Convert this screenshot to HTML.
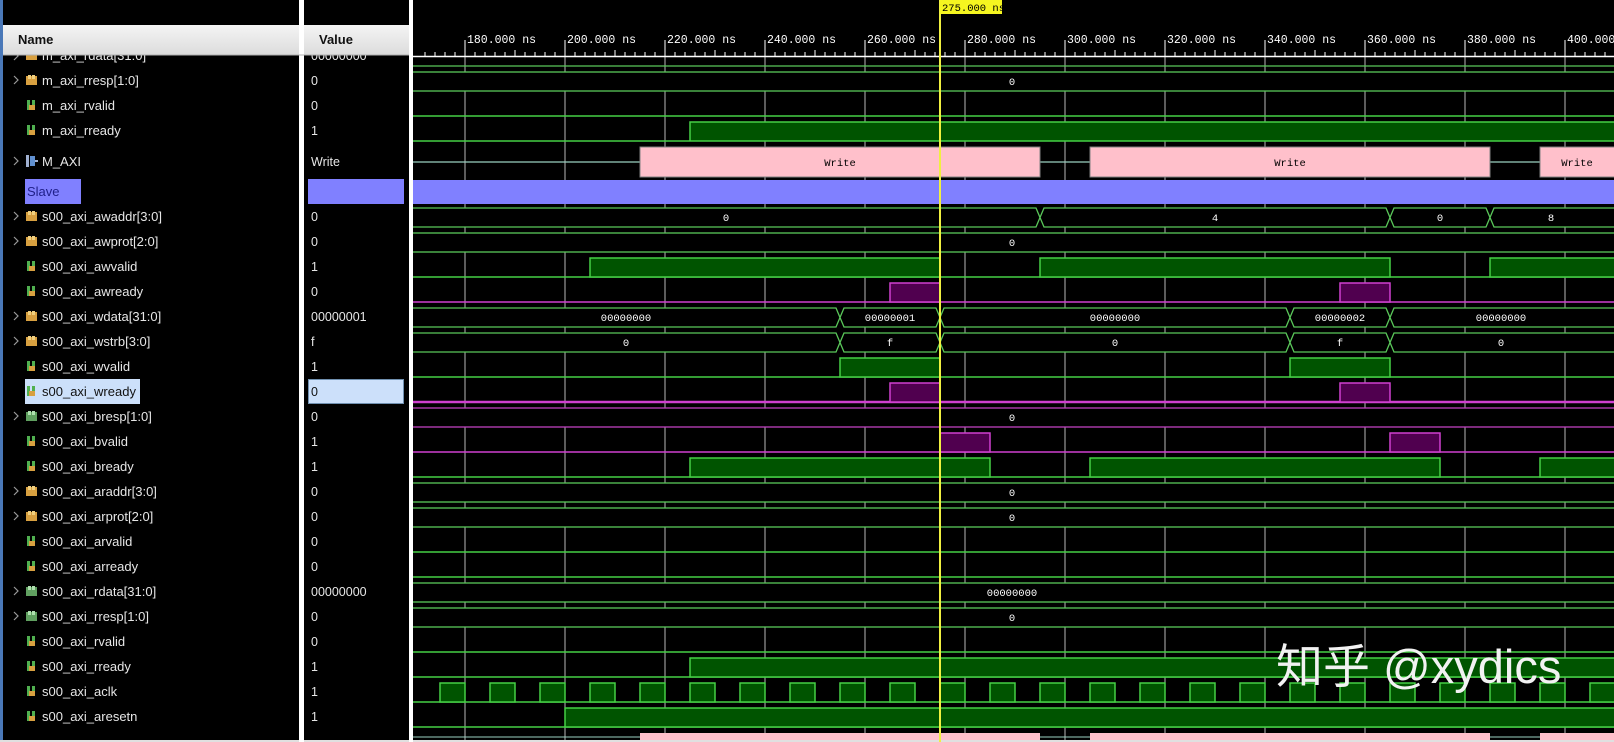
<!DOCTYPE html>
<html><head><meta charset="utf-8"><style>
html,body{margin:0;padding:0;background:#000;width:1614px;height:742px;overflow:hidden}
svg{display:block}
.n{font-family:"Liberation Sans",sans-serif;font-size:13px;fill:#e6e6e6}
.v{font-family:"Liberation Sans",sans-serif;font-size:12.5px;fill:#e6e6e6}
.m{font-family:"Liberation Mono",monospace;font-size:10.5px;fill:#fff}
.r{font-family:"Liberation Mono",monospace;font-size:11.5px;fill:#fff}
.ar{fill:none;stroke:#9a9a9a;stroke-width:1.2}
.g{stroke:#46d046;stroke-width:1.5;fill:#005400}
.gl{stroke:#46d046;stroke-width:1.5;fill:none}
.p{stroke:#d040d0;stroke-width:1.5;fill:#50004f}
.pl{stroke:#d040d0;stroke-width:1.5;fill:none}
.b{stroke:#5ac85a;stroke-width:1.3;fill:#000}
.bm{stroke:#c040c0;stroke-width:1.3;fill:#000}
</style></head><body>
<svg width="1614" height="742" xmlns="http://www.w3.org/2000/svg">
<defs>
<g id="bit"><rect x="0" y="0" width="3" height="10" fill="#50b050"/><rect x="5" y="0" width="3" height="10" fill="#50b050"/><rect x="2" y="5" width="6" height="5" fill="#d8a040"/></g>
<g id="bus"><rect x="0" y="1" width="11" height="9" fill="#d8a040"/><rect x="2" y="0" width="3" height="4" fill="#f0d080"/><rect x="6" y="0" width="3" height="4" fill="#f0d080"/></g>
<g id="busg"><rect x="0" y="1" width="11" height="9" fill="#60a060"/><rect x="2" y="0" width="3" height="4" fill="#b0e0b0"/><rect x="6" y="0" width="3" height="4" fill="#b0e0b0"/></g>
</defs>

<rect x="0" y="0" width="3" height="742" fill="#4a78b8"/>

<g stroke="#b8b8b8" stroke-width="1">
<line x1="465" y1="56" x2="465" y2="742"/><line x1="565" y1="56" x2="565" y2="742"/><line x1="665" y1="56" x2="665" y2="742"/><line x1="765" y1="56" x2="765" y2="742"/><line x1="865" y1="56" x2="865" y2="742"/><line x1="965" y1="56" x2="965" y2="742"/><line x1="1065" y1="56" x2="1065" y2="742"/><line x1="1165" y1="56" x2="1165" y2="742"/><line x1="1265" y1="56" x2="1265" y2="742"/><line x1="1365" y1="56" x2="1365" y2="742"/><line x1="1465" y1="56" x2="1465" y2="742"/><line x1="1565" y1="56" x2="1565" y2="742"/>
</g>

<line x1="413" y1="66" x2="1614" y2="66" stroke="#5ac85a" stroke-width="1.3"/>
<rect class="b" x="405" y="72" width="1220" height="19"/><text class="m" x="1012" y="85" text-anchor="middle">0</text>
<line class="gl" x1="413" y1="116" x2="1614" y2="116"/>
<path class="g" d="M413 141H690V122H1620V141H690"/>
<line x1="413" y1="162" x2="1614" y2="162" stroke="#9ad0c0" stroke-width="1.3"/>
<g fill="#ffc0cb" stroke="#808080"><rect x="640" y="147" width="400" height="30"/><rect x="1090" y="147" width="400" height="30"/><rect x="1540" y="147" width="80" height="30"/></g>
<g class="m" style="fill:#000"><text x="840" y="166" text-anchor="middle">Write</text><text x="1290" y="166" text-anchor="middle">Write</text><text x="1577" y="166" text-anchor="middle">Write</text></g>
<rect x="413" y="180" width="1201" height="24" fill="#8080ff"/>
<path class="b" d="M405 208H1036L1040 217.5L1036 227H405Z"/>
<path class="b" d="M1044 208H1386L1390 217.5L1386 227H1044L1040 217.5Z"/>
<path class="b" d="M1394 208H1486L1490 217.5L1486 227H1394L1390 217.5Z"/>
<path class="b" d="M1494 208H1620V227H1494L1490 217.5Z"/>
<g class="m"><text x="726" y="221" text-anchor="middle">0</text><text x="1215" y="221" text-anchor="middle">4</text><text x="1440" y="221" text-anchor="middle">0</text><text x="1551" y="221" text-anchor="middle">8</text></g>
<rect class="b" x="405" y="233" width="1220" height="19"/><text class="m" x="1012" y="246" text-anchor="middle">0</text>
<path class="gl" d="M413 277H1614"/>
<rect class="g" x="590" y="258" width="350" height="19"/><rect class="g" x="1040" y="258" width="350" height="19"/><rect class="g" x="1490" y="258" width="130" height="19"/>
<path class="pl" d="M413 302H1614"/>
<rect class="p" x="890" y="283" width="50" height="19"/><rect class="p" x="1340" y="283" width="50" height="19"/>
<path class="b" d="M405 308H836L840 317.5L836 327H405Z"/>
<path class="b" d="M844 308H936L940 317.5L936 327H844L840 317.5Z"/>
<path class="b" d="M944 308H1286L1290 317.5L1286 327H944L940 317.5Z"/>
<path class="b" d="M1294 308H1386L1390 317.5L1386 327H1294L1290 317.5Z"/>
<path class="b" d="M1394 308H1620V327H1394L1390 317.5Z"/>
<g class="m"><text x="626" y="321" text-anchor="middle">00000000</text><text x="890" y="321" text-anchor="middle">00000001</text><text x="1115" y="321" text-anchor="middle">00000000</text><text x="1340" y="321" text-anchor="middle">00000002</text><text x="1501" y="321" text-anchor="middle">00000000</text></g>
<path class="b" d="M405 333H836L840 342.5L836 352H405Z"/>
<path class="b" d="M844 333H936L940 342.5L936 352H844L840 342.5Z"/>
<path class="b" d="M944 333H1286L1290 342.5L1286 352H944L940 342.5Z"/>
<path class="b" d="M1294 333H1386L1390 342.5L1386 352H1294L1290 342.5Z"/>
<path class="b" d="M1394 333H1620V352H1394L1390 342.5Z"/>
<g class="m"><text x="626" y="346" text-anchor="middle">0</text><text x="890" y="346" text-anchor="middle">f</text><text x="1115" y="346" text-anchor="middle">0</text><text x="1340" y="346" text-anchor="middle">f</text><text x="1501" y="346" text-anchor="middle">0</text></g>
<path class="gl" d="M413 377H1614"/>
<rect class="g" x="840" y="358" width="100" height="19"/><rect class="g" x="1290" y="358" width="100" height="19"/>
<path d="M413 402H1614" stroke="#d040d0" stroke-width="2.5"/>
<rect class="p" x="890" y="383" width="50" height="19"/><rect class="p" x="1340" y="383" width="50" height="19"/>
<rect class="bm" x="405" y="408" width="1220" height="19"/><text class="m" x="1012" y="421" text-anchor="middle">0</text>
<path class="pl" d="M413 452H1614"/>
<rect class="p" x="940" y="433" width="50" height="19"/><rect class="p" x="1390" y="433" width="50" height="19"/>
<path class="gl" d="M413 477H1614"/>
<rect class="g" x="690" y="458" width="300" height="19"/><rect class="g" x="1090" y="458" width="350" height="19"/><rect class="g" x="1540" y="458" width="80" height="19"/>
<rect class="b" x="405" y="483" width="1220" height="19"/><text class="m" x="1012" y="496" text-anchor="middle">0</text>
<rect class="b" x="405" y="508" width="1220" height="19"/><text class="m" x="1012" y="521" text-anchor="middle">0</text>
<path class="gl" d="M413 552H1614M413 577H1614"/>
<rect class="b" x="405" y="583" width="1220" height="19"/><text class="m" x="1012" y="596" text-anchor="middle">00000000</text>
<rect class="b" x="405" y="608" width="1220" height="19"/><text class="m" x="1012" y="621" text-anchor="middle">0</text>
<path class="gl" d="M413 652H1614"/>
<path class="gl" d="M413 677H1614"/><rect class="g" x="690" y="658" width="930" height="19"/>
<path class="gl" d="M413 702H1614"/>
<g class="g">
<rect x="440" y="683" width="25" height="19"/><rect x="490" y="683" width="25" height="19"/><rect x="540" y="683" width="25" height="19"/><rect x="590" y="683" width="25" height="19"/><rect x="640" y="683" width="25" height="19"/><rect x="690" y="683" width="25" height="19"/><rect x="740" y="683" width="25" height="19"/><rect x="790" y="683" width="25" height="19"/><rect x="840" y="683" width="25" height="19"/><rect x="890" y="683" width="25" height="19"/><rect x="940" y="683" width="25" height="19"/><rect x="990" y="683" width="25" height="19"/><rect x="1040" y="683" width="25" height="19"/><rect x="1090" y="683" width="25" height="19"/><rect x="1140" y="683" width="25" height="19"/><rect x="1190" y="683" width="25" height="19"/><rect x="1240" y="683" width="25" height="19"/><rect x="1290" y="683" width="25" height="19"/><rect x="1340" y="683" width="25" height="19"/><rect x="1390" y="683" width="25" height="19"/><rect x="1440" y="683" width="25" height="19"/><rect x="1490" y="683" width="25" height="19"/><rect x="1540" y="683" width="25" height="19"/><rect x="1590" y="683" width="25" height="19"/>
</g>
<path class="gl" d="M413 727H1614"/><rect class="g" x="565" y="708" width="1055" height="19"/>
<line x1="413" y1="737" x2="1614" y2="737" stroke="#9ad0c0"/>
<g fill="#ffc0cb"><rect x="640" y="733" width="400" height="9"/><rect x="1090" y="733" width="400" height="9"/><rect x="1540" y="733" width="80" height="9"/></g>
<rect x="0" y="740" width="1614" height="2" fill="#e0e0e0"/>

<text x="1276" y="683" style="font-family:'Liberation Sans','Noto Sans CJK SC',sans-serif;font-size:47px;fill:#f2f2f2">知乎 @xydics</text>

<!-- left panel backgrounds over wave overflow -->
<rect x="3" y="56" width="296" height="684" fill="#000"/>
<rect x="304" y="56" width="105" height="684" fill="#000"/>
<rect x="299" y="0" width="5" height="742" fill="#fff"/>
<rect x="409" y="0" width="4" height="742" fill="#fff"/>

<rect x="413" y="0" width="1201" height="56" fill="#000"/>
<line x1="413" y1="56.5" x2="1614" y2="56.5" stroke="#fff" stroke-width="1.5"/>
<path stroke="#fff" stroke-width="1" d="M425 52V56M435 52V56M445 52V56M455 52V56M475 52V56M485 52V56M495 52V56M505 52V56M515 50V56M525 52V56M535 52V56M545 52V56M555 52V56M575 52V56M585 52V56M595 52V56M605 52V56M615 50V56M625 52V56M635 52V56M645 52V56M655 52V56M675 52V56M685 52V56M695 52V56M705 52V56M715 50V56M725 52V56M735 52V56M745 52V56M755 52V56M775 52V56M785 52V56M795 52V56M805 52V56M815 50V56M825 52V56M835 52V56M845 52V56M855 52V56M875 52V56M885 52V56M895 52V56M905 52V56M915 50V56M925 52V56M935 52V56M945 52V56M955 52V56M975 52V56M985 52V56M995 52V56M1005 52V56M1015 50V56M1025 52V56M1035 52V56M1045 52V56M1055 52V56M1075 52V56M1085 52V56M1095 52V56M1105 52V56M1115 50V56M1125 52V56M1135 52V56M1145 52V56M1155 52V56M1175 52V56M1185 52V56M1195 52V56M1205 52V56M1215 50V56M1225 52V56M1235 52V56M1245 52V56M1255 52V56M1275 52V56M1285 52V56M1295 52V56M1305 52V56M1315 50V56M1325 52V56M1335 52V56M1345 52V56M1355 52V56M1375 52V56M1385 52V56M1395 52V56M1405 52V56M1415 50V56M1425 52V56M1435 52V56M1445 52V56M1455 52V56M1475 52V56M1485 52V56M1495 52V56M1505 52V56M1515 50V56M1525 52V56M1535 52V56M1545 52V56M1555 52V56M1575 52V56M1585 52V56M1595 52V56M1605 52V56
M465 40V56M565 40V56M665 40V56M765 40V56M865 40V56M965 40V56M1065 40V56M1165 40V56M1265 40V56M1365 40V56M1465 40V56M1565 40V56"/>
<g class="r"><text x="467" y="43">180.000 ns</text><text x="567" y="43">200.000 ns</text><text x="667" y="43">220.000 ns</text><text x="767" y="43">240.000 ns</text><text x="867" y="43">260.000 ns</text><text x="967" y="43">280.000 ns</text><text x="1067" y="43">300.000 ns</text><text x="1167" y="43">320.000 ns</text><text x="1267" y="43">340.000 ns</text><text x="1367" y="43">360.000 ns</text><text x="1467" y="43">380.000 ns</text><text x="1567" y="43">400.000 ns</text></g>

<line x1="940" y1="0" x2="940" y2="742" stroke="#f0f040" stroke-width="2"/>
<rect x="940" y="0" width="62" height="14" fill="#f5f520"/>
<text x="942" y="11" style="font-family:'Liberation Mono',monospace;font-size:10.5px;fill:#000">275.000 ns</text>

<g class="n">
<text x="42" y="60">m_axi_rdata[31:0]</text>
<text x="42" y="85">m_axi_rresp[1:0]</text>
<text x="42" y="110">m_axi_rvalid</text>
<text x="42" y="135">m_axi_rready</text>
<text x="42" y="166">M_AXI</text>
<text x="42" y="221">s00_axi_awaddr[3:0]</text>
<text x="42" y="246">s00_axi_awprot[2:0]</text>
<text x="42" y="271">s00_axi_awvalid</text>
<text x="42" y="296">s00_axi_awready</text>
<text x="42" y="321">s00_axi_wdata[31:0]</text>
<text x="42" y="346">s00_axi_wstrb[3:0]</text>
<text x="42" y="371">s00_axi_wvalid</text>
<rect x="25" y="379" width="115" height="25" fill="#cce0fa" stroke="none"/>
<text x="42" y="396" style="fill:#111">s00_axi_wready</text>
<text x="42" y="421">s00_axi_bresp[1:0]</text>
<text x="42" y="446">s00_axi_bvalid</text>
<text x="42" y="471">s00_axi_bready</text>
<text x="42" y="496">s00_axi_araddr[3:0]</text>
<text x="42" y="521">s00_axi_arprot[2:0]</text>
<text x="42" y="546">s00_axi_arvalid</text>
<text x="42" y="571">s00_axi_arready</text>
<text x="42" y="596">s00_axi_rdata[31:0]</text>
<text x="42" y="621">s00_axi_rresp[1:0]</text>
<text x="42" y="646">s00_axi_rvalid</text>
<text x="42" y="671">s00_axi_rready</text>
<text x="42" y="696">s00_axi_aclk</text>
<text x="42" y="721">s00_axi_aresetn</text>
</g>
<rect x="25" y="179" width="56" height="25" fill="#8080ff"/>
<text class="n" x="27" y="196" style="fill:#20208a">Slave</text>
<g class="ar">
<path d="M14 52l4 4-4 4"/><path d="M14 76l4 4-4 4"/><path d="M14 157l4 4-4 4"/><path d="M14 212l4 4-4 4"/><path d="M14 237l4 4-4 4"/><path d="M14 312l4 4-4 4"/><path d="M14 337l4 4-4 4"/><path d="M14 412l4 4-4 4"/><path d="M14 487l4 4-4 4"/><path d="M14 512l4 4-4 4"/><path d="M14 587l4 4-4 4"/><path d="M14 612l4 4-4 4"/>
</g>
<use href="#bus" x="26" y="50"/><use href="#bus" x="26" y="75"/>
<use href="#bit" x="27" y="100"/><use href="#bit" x="27" y="125"/>
<g><rect x="26" y="155" width="3" height="12" fill="#a0b0d0"/><rect x="30" y="156" width="5" height="10" fill="#6090d0"/><rect x="35" y="160" width="3" height="2" fill="#a0b0d0"/></g>
<use href="#bus" x="26" y="211"/><use href="#bus" x="26" y="236"/>
<use href="#bit" x="27" y="261"/><use href="#bit" x="27" y="286"/>
<use href="#bus" x="26" y="311"/><use href="#bus" x="26" y="336"/>
<use href="#bit" x="27" y="361"/><use href="#bit" x="27" y="386"/>
<use href="#busg" x="26" y="411"/>
<use href="#bit" x="27" y="436"/><use href="#bit" x="27" y="461"/>
<use href="#bus" x="26" y="486"/><use href="#bus" x="26" y="511"/>
<use href="#bit" x="27" y="536"/><use href="#bit" x="27" y="561"/>
<use href="#busg" x="26" y="586"/><use href="#busg" x="26" y="611"/>
<use href="#bit" x="27" y="636"/><use href="#bit" x="27" y="661"/><use href="#bit" x="27" y="686"/><use href="#bit" x="27" y="711"/>

<g class="v">
<text x="311" y="60">00000000</text>
<text x="311" y="85">0</text><text x="311" y="110">0</text><text x="311" y="135">1</text><text x="311" y="166">Write</text>
<text x="311" y="221">0</text><text x="311" y="246">0</text><text x="311" y="271">1</text><text x="311" y="296">0</text>
<text x="311" y="321">00000001</text><text x="311" y="346">f</text><text x="311" y="371">1</text>
<text x="311" y="421">0</text><text x="311" y="446">1</text><text x="311" y="471">1</text>
<text x="311" y="496">0</text><text x="311" y="521">0</text><text x="311" y="546">0</text><text x="311" y="571">0</text>
<text x="311" y="596">00000000</text><text x="311" y="621">0</text><text x="311" y="646">0</text><text x="311" y="671">1</text><text x="311" y="696">1</text><text x="311" y="721">1</text>
</g>
<rect x="308" y="179" width="96" height="25" fill="#8080ff"/>
<rect x="308.5" y="379.5" width="95" height="24" fill="#cce0fa" stroke="#7090b0"/>
<text class="v" x="311" y="396" style="fill:#111">0</text>

<rect x="3" y="0" width="296" height="25" fill="#000"/>
<rect x="304" y="0" width="105" height="25" fill="#000"/>
<defs><linearGradient id="hg" x1="0" y1="0" x2="0" y2="1"><stop offset="0" stop-color="#f4f4f4"/><stop offset="1" stop-color="#dcdcdc"/></linearGradient></defs>
<rect x="3" y="25" width="296" height="30" fill="url(#hg)"/>
<rect x="304" y="25" width="105" height="30" fill="url(#hg)"/>
<line x1="3" y1="55" x2="409" y2="55" stroke="#b0b0b0"/>
<text x="18" y="44" style="font-family:'Liberation Sans',sans-serif;font-size:13px;font-weight:bold;fill:#111">Name</text>
<text x="319" y="44" style="font-family:'Liberation Sans',sans-serif;font-size:13px;font-weight:bold;fill:#111">Value</text>
</svg>
</body></html>
